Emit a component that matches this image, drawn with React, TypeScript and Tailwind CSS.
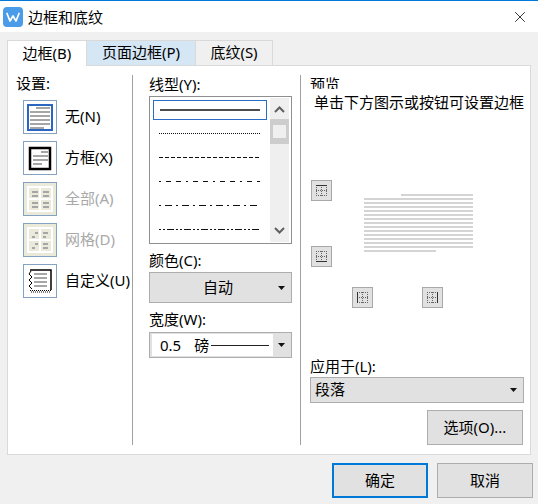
import { X } from 'lucide-react'

const FONT = "font-['Noto_Sans','Noto_Sans_CJK_SC',sans-serif]"

const Bars = ({ items, color = '#a6a6a6' }: { items: number[][]; color?: string }) => (
  <>
    {items.map(([x, y, w], i) => (
      <rect key={i} x={x} y={y} width={w} height={2} fill={color} />
    ))}
  </>
)

const NoneIcon = () => (
  <svg width="32" height="32" viewBox="0 0 32 32">
    <rect x="4" y="4" width="24" height="25" fill="none" stroke="#2b66c2" strokeWidth="2" />
    <Bars items={[[12, 6, 14], [6, 10, 20], [6, 14, 20], [6, 18, 20], [6, 22, 20], [6, 26, 14]]} />
  </svg>
)

const BoxIcon = () => (
  <svg width="32" height="32" viewBox="0 0 32 32">
    <rect x="6" y="6" width="20" height="21" fill="none" stroke="#000" strokeWidth="2.5" />
    <Bars items={[[17, 9, 7], [9, 13, 15], [9, 17, 15], [9, 21, 9]]} />
  </svg>
)

const AllIcon = () => (
  <svg width="32" height="32" viewBox="0 0 32 32">
    <rect x="4" y="4" width="24" height="24" fill="none" stroke="#fff" strokeWidth="2" />
    <path d="M16 4v24M4 16h24" stroke="#fff" strokeWidth="2" />
    <Bars
      items={[[8, 8, 6], [19, 8, 6], [8, 12, 6], [19, 12, 6], [8, 19, 6], [19, 19, 6], [8, 23, 6], [19, 23, 6]]}
    />
  </svg>
)

const GridIcon = () => (
  <svg width="32" height="32" viewBox="0 0 32 32">
    <rect x="4" y="4" width="24" height="24" fill="none" stroke="#fff" strokeWidth="2" />
    <path d="M16 4v24M4 16h24" stroke="#fff" strokeWidth="2" />
    <Bars
      items={[[11, 8, 3], [19, 8, 5], [8, 12, 3], [19, 12, 3], [11, 19, 3], [19, 19, 5], [8, 23, 3], [19, 23, 5]]}
    />
  </svg>
)

const CustomIcon = () => (
  <svg width="32" height="32" viewBox="0 0 32 32">
    <path d="M6 5h21v20" fill="none" stroke="#000" strokeWidth="1.5" />
    <path d="M7 6 5 9l3 3-3 3 3 3-3 3 3 3" fill="none" stroke="#000" />
    <path d="M6 25.500h21M7 27h20" stroke="#000" strokeWidth="1" strokeDasharray="1 1" />
    <Bars items={[[10, 8, 13], [10, 12, 13], [10, 16, 13], [10, 20, 13]]} />
  </svg>
)

const settings = [
  { label: '无(N)', icon: <NoneIcon />, off: false },
  { label: '方框(X)', icon: <BoxIcon />, off: false },
  { label: '全部(A)', icon: <AllIcon />, off: true },
  { label: '网格(D)', icon: <GridIcon />, off: true },
  { label: '自定义(U)', icon: <CustomIcon />, off: false },
]

const lineStyles = ['', '1 1', '4 2', '2 5 5 5 5 5', '2 4 7 4', '2 2 2 2 7 2']

const Caret = () => (
  <svg width="7" height="4" viewBox="0 0 7 4">
    <path d="M0 0h7L3.500 4z" fill="#111" />
  </svg>
)

// small preview buttons, the solid edge is the only difference
const EdgeButton = ({ edge }: { edge: string }) => (
  <div className="flex h-[21px] w-[21px] items-center justify-center border border-[#a8a8a8] bg-[#e1e1e1]">
    <svg width="19" height="19" viewBox="0 0 19 19">
      <path
        d="M4 4.500h11M4 9.500h11M4 14.500h11M4.500 4v11M9.500 4v11M14.500 4v11"
        stroke="#666"
        strokeWidth="1"
        strokeDasharray="1 1"
        fill="none"
      />
      <path d={edge} stroke="#333" strokeWidth="1" fill="none" />
    </svg>
  </div>
)

const previewRows = Array.from({ length: 13 })

export default function App() {
  return (
    <div className={`flex h-[504px] w-[538px] flex-col overflow-hidden bg-[#f0f0f0] text-[15px] leading-[18px] text-black ${FONT}`}>
      {/* title bar */}
      <div className="flex h-[32px] shrink-0 items-center border-t border-[#0078d7] bg-white pl-[3px] pr-[9px]">
        <svg width="20" height="20" viewBox="0 0 20 20">
          <rect width="20" height="20" rx="4" fill="#4a9ce8" />
          <path d="M4 6.500 7 14l3-5 3 5 3-7.500" fill="none" stroke="#fff" strokeWidth="1.700" strokeLinejoin="round" strokeLinecap="round" />
        </svg>
        <span className="ml-[5px]">边框和底纹</span>
        <X className="ml-auto text-[#222]" size={18} strokeWidth={1.2} />
      </div>

      {/* tabs */}
      <div className="mt-[8px] flex h-[25px] shrink-0 pl-[7px]">
        <div className="relative z-10 flex h-[26px] w-[80px] items-center justify-center border border-b-0 border-[#d9d9d9] bg-white pb-[2px]">边框(B)</div>
        <div className="flex w-[108px] items-center justify-center border-t border-[#d9d9d9] bg-[#d5e6f5] pb-[2px]">页面边框(P)</div>
        <div className="flex w-[78px] items-center justify-center border border-b-0 border-[#d9d9d9] pb-[2px]">底纹(S)</div>
      </div>

      {/* panel */}
      <div className="mx-[7px] flex h-[390px] shrink-0 border border-[#d9d9d9] bg-white py-[9px]">
        <div className="w-[125px] shrink-0 border-r border-[#a0a0a0] pl-[8px]">
          <div className="-mt-px pb-px">设置:</div>
          <div className="mt-[7px] flex flex-col gap-[7px] pl-[7px]">
            {settings.map(s => (
              <div key={s.label} className="flex h-[34px] items-center">
                <div className={`h-[34px] w-[34px] shrink-0 border border-[#84a2c2] ${s.off ? 'bg-[#ebe9da]' : 'bg-white'}`}>{s.icon}</div>
                <span className={`mb-[2px] ml-[8px] whitespace-nowrap ${s.off ? 'text-[#a9a9a9]' : ''}`}>{s.label}</span>
              </div>
            ))}
          </div>
        </div>

        <div className="w-[168px] shrink-0 border-r border-[#a0a0a0] pl-[16px]">
          <div>线型(Y):</div>
          <div className="mt-[3px] flex h-[148px] w-[143px] border border-[#8f8f8f]">
            <div className="flex w-[117px] flex-col gap-[4px] pl-[3px] pt-[3px]">
              {lineStyles.map((dash, i) => (
                <div key={i} className={`flex h-[20px] w-[114px] shrink-0 items-center px-[6px] ${i === 0 ? 'border border-[#2b6cc4]' : ''}`}>
                  <svg width="101" height="2" viewBox="0 0 101 2">
                    <path d={i === 0 ? 'M0 1h101' : 'M0 .5h101'} stroke="#111" strokeWidth={i === 0 ? 1.5 : 1} strokeDasharray={dash || undefined} />
                  </svg>
                </div>
              ))}
            </div>
            <div className="my-px ml-[3px] flex w-[19px] flex-col items-center bg-[#efefef]">
              <svg className="mt-[8px]" width="11" height="7" viewBox="0 0 11 7">
                <path d="M1 6l4.500-4.500L10 6" fill="none" stroke="#606060" strokeWidth="2" />
              </svg>
              <div className="mt-[6px] flex h-[25px] w-full items-center justify-center bg-[#cdcdcd]">
                <div className="h-[13px] w-[13px] bg-[#efefef]" />
              </div>
              <svg className="mb-[8px] mt-auto" width="11" height="7" viewBox="0 0 11 7">
                <path d="M1 1l4.500 4.500L10 1" fill="none" stroke="#606060" strokeWidth="2" />
              </svg>
            </div>
          </div>

          <div className="mt-[7px]">颜色(C):</div>
          <div className="mt-[3px] flex h-[31px] w-[143px] items-center border border-[#adadad] bg-[#e1e1e1] pr-[6px]">
            <span className="mb-[2px] flex-1 pl-[8px] text-center">自动</span>
            <Caret />
          </div>

          <div className="mt-[7px] pb-px">宽度(W):</div>
          <div className="mt-[3px] flex h-[26px] w-[143px] items-center border border-[#adadad] bg-[#e1e1e1] pl-[2px] pr-[6px]">
            <div className="flex h-[22px] w-[121px] items-center bg-white pl-[8px]">
              <span className="whitespace-pre">0.5</span>
              <span className="ml-[13px]">磅</span>
              <div className="ml-[2px] h-px w-[58px] bg-[#222]" />
            </div>
            <div className="ml-auto"><Caret /></div>
          </div>
        </div>

        <div className="flex-1 pl-[9px]">
          <div className="mt-[2px] h-[12px] overflow-hidden leading-[14px]">预览</div>
          <div className="mt-[4px] whitespace-nowrap pl-[4px]">单击下方图示或按钮可设置边框</div>

          <div className="ml-px mt-[69px] flex">
            <div className="flex flex-col gap-[45px]">
              <EdgeButton edge="M4 4.500h11" />
              <EdgeButton edge="M4 14.500h11" />
            </div>
            <div className="ml-[32px] mt-[14px] flex w-[109px] flex-col gap-[2px]">
              <div className="ml-[37px] h-[2px] w-[72px] bg-[#d4d4d4]" />
              {previewRows.map((_, i) => (
                <div key={i} className="h-[2px] bg-[#d4d4d4]" />
              ))}
              <div className="h-[2px] w-[72px] bg-[#d4d4d4]" />
            </div>
          </div>
          <div className="ml-[42px] mt-[20px] flex gap-[49px]">
            <EdgeButton edge="M4.500 4v11" />
            <EdgeButton edge="M14.500 4v11" />
          </div>

          <div className="mt-[49px]">应用于(L):</div>
          <div className="mt-[2px] flex h-[26px] w-[214px] items-center border border-[#adadad] bg-[#e1e1e1] pl-[4px] pr-[6px]">
            <span className="mb-[2px]">段落</span>
            <div className="ml-auto"><Caret /></div>
          </div>
          <div className="ml-[117px] mt-[7px] flex h-[35px] w-[96px] items-center justify-center border border-[#adadad] bg-[#e1e1e1] pb-[2px]">选项(O)...</div>
        </div>
      </div>

      {/* footer */}
      <div className="mt-[8px] flex justify-end gap-[9px] pr-[5px]">
        <div className="flex h-[35px] w-[96px] items-center justify-center border-2 border-[#0078d7] bg-[#e1e1e1] pb-[2px]">确定</div>
        <div className="flex h-[35px] w-[96px] items-center justify-center border border-[#adadad] bg-[#e1e1e1] pb-[2px]">取消</div>
      </div>
    </div>
  )
}
